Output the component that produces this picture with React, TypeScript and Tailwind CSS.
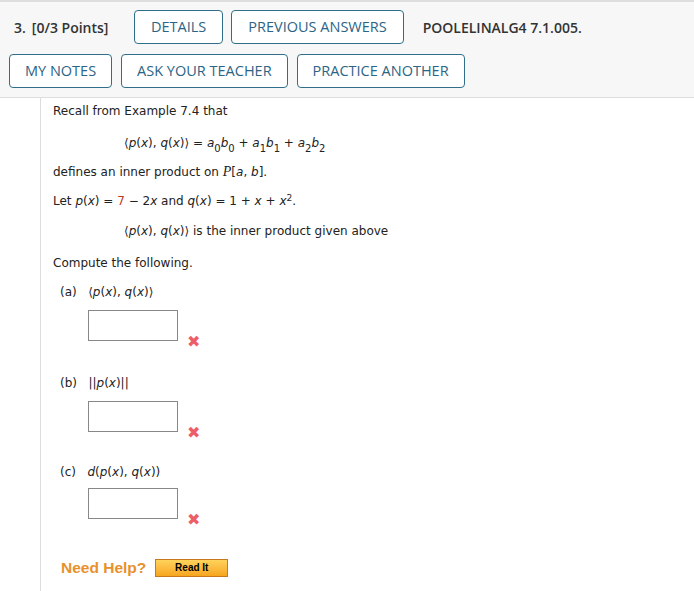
import React from 'react';

const btn =
  'h-[34px] flex items-center border border-[#2f6f8a] rounded-[4px] bg-white text-[#2b6485] text-[14.5px] font-[Open_Sans,sans-serif]';

const V = ({ children }: { children: React.ReactNode }) => <i className="italic">{children}</i>;
const Sub = ({ children }: { children: React.ReactNode }) => (
  <span className="relative top-[5px] text-[10px]">{children}</span>
);

const AnswerBox = () => (
  <div className="flex items-end ml-[35px]">
    <div className="w-[90px] h-[31px] border border-[#888] bg-white" />
    <span className="text-[#ec5e68] text-[16px] leading-none font-bold mb-[-9px] ml-[9px]">✖</span>
  </div>
);

const App: React.FC = () => {
  return (
    <div className="w-[694px] h-[591px] bg-white overflow-hidden font-['DejaVu_Sans',Verdana,sans-serif] text-[12px] text-[#222]">
      {/* Header */}
      <div className="border-t-2 border-b border-[#dedede] bg-[#f7f7f7] h-[98px] pt-[8px] pl-[9px]">
        <div className="flex items-center">
          <div className="flex items-center font-['Open_Sans',sans-serif] font-semibold text-[14px] text-[#333] pl-[5px] w-[125px]">
            <span>3.</span>
            <span className="ml-[6px]">[0/3 Points]</span>
          </div>
          <div className={`${btn} px-[16px]`}>DETAILS</div>
          <div className={`${btn} px-[16px] ml-[8px]`}>PREVIOUS ANSWERS</div>
          <div className="ml-[19px] font-['Open_Sans',sans-serif] font-semibold text-[14px] text-[#333]">POOLELINALG4 7.1.005.</div>
        </div>
        <div className="flex items-center gap-[9px] mt-[10px]">
          <div className={`${btn} px-[15px]`}>MY NOTES</div>
          <div className={`${btn} px-[15px]`}>ASK YOUR TEACHER</div>
          <div className={`${btn} px-[15px]`}>PRACTICE ANOTHER</div>
        </div>
      </div>

      {/* Body */}
      <div className="ml-[40px] border-l border-[#ddd] h-[493px] pl-[12px] pt-[3px]">
        <p className="leading-[20px]">Recall from Example 7.4 that</p>
        <p className="ml-[71px] mt-[12px] leading-[20px]">
          ⟨<V>p</V>(<V>x</V>), <V>q</V>(<V>x</V>)⟩ = <V>a</V><Sub>0</Sub><V>b</V><Sub>0</Sub> + <V>a</V><Sub>1</Sub><V>b</V><Sub>1</Sub> + <V>a</V><Sub>2</Sub><V>b</V><Sub>2</Sub>
        </p>
        <p className="mt-[8px] leading-[20px]">
          defines an inner product on <span className="font-['Liberation_Serif',serif] italic text-[14px]">P</span>[<V>a</V>, <V>b</V>].
        </p>
        <p className="mt-[9px] leading-[20px]">
          Let <V>p</V>(<V>x</V>) = <span className="text-[#c0392b]">7</span> − 2<V>x</V> and <V>q</V>(<V>x</V>) = 1 + <V>x</V> + <V>x</V><sup>2</sup>.
        </p>
        <p className="ml-[71px] mt-[10px] leading-[20px]">
          ⟨<V>p</V>(<V>x</V>), <V>q</V>(<V>x</V>)⟩ is the inner product given above
        </p>
        <p className="mt-[12px] leading-[20px]">Compute the following.</p>

        <p className="ml-[7px] mt-[9px] leading-[20px]">
          (a)&nbsp;&nbsp; ⟨<V>p</V>(<V>x</V>), <V>q</V>(<V>x</V>)⟩
        </p>
        <div className="mt-[8px]">
          <AnswerBox />
        </div>

        <p className="ml-[7px] mt-[32px] leading-[20px]">
          (b)&nbsp;&nbsp; ||<V>p</V>(<V>x</V>)||
        </p>
        <div className="mt-[8px]">
          <AnswerBox />
        </div>

        <p className="ml-[7px] mt-[30px] leading-[20px]">
          (c)&nbsp;&nbsp; <V>d</V>(<V>p</V>(<V>x</V>), <V>q</V>(<V>x</V>))
        </p>
        <div className="mt-[6px]">
          <AnswerBox />
        </div>

        <div className="flex items-center ml-[8px] mt-[37px] gap-[9px]">
          <span className="font-['Liberation_Sans',Arial,sans-serif] font-bold text-[15.5px] text-[#e8912c]">Need Help?</span>
          <div className="w-[73px] h-[18px] flex items-center justify-center border border-[#c8781e] bg-gradient-to-b from-[#ffd35a] to-[#f7a51c] font-['Liberation_Sans',Arial,sans-serif] font-bold text-[10px] text-black">
            Read It
          </div>
        </div>
      </div>
    </div>
  );
};

export default App;
